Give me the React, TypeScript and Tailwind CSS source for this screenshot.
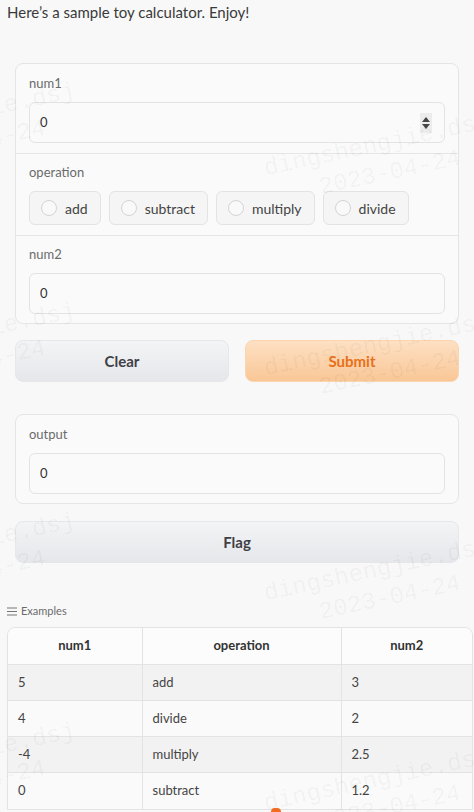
import React from "react";

const FONT = { fontFamily: "Lato, 'Noto Sans', sans-serif" };

const OPERATIONS = ["add", "subtract", "multiply", "divide"];

const EXAMPLES = [
  ["5", "add", "3"],
  ["4", "divide", "2"],
  ["-4", "multiply", "2.5"],
  ["0", "subtract", "1.2"],
];

function FieldLabel({ children }: { children: React.ReactNode }) {
  return <div className="text-[13px] leading-4 text-[#6b6b6b]">{children}</div>;
}

function NumberBox({ value, spinner }: { value: string; spinner?: boolean }) {
  return (
    <div className="mt-[11px] flex h-[41px] items-center justify-between rounded-md border border-[#e3e3e3] bg-[#fafafa] pl-[10px] pr-[12px] text-[13px] text-[#333]">
      <span>{value}</span>
      {spinner && (
        <span className="flex h-[20px] w-[12px] flex-col items-center justify-center gap-[2px] bg-[#ececec]">
          <svg width="8" height="5" viewBox="0 0 8 5">
            <path d="M4 0L8 5H0z" fill="#444" />
          </svg>
          <svg width="8" height="5" viewBox="0 0 8 5">
            <path d="M0 0h8L4 5z" fill="#444" />
          </svg>
        </span>
      )}
    </div>
  );
}

// faint diagonal watermark stamped over the page
function Watermark({ className }: { className: string }) {
  return (
    <div
      className={`pointer-events-none absolute -rotate-[12deg] text-[24px] leading-[30px] text-black/[0.045] ${className}`}
      style={{ fontFamily: "'Liberation Mono', monospace" }}
    >
      <div>dingshengjie.dsj</div>
      <div className="pl-[50px]">2023-04-24</div>
    </div>
  );
}

export default function App() {
  return (
    <div className="relative min-h-[812px] overflow-hidden bg-[#f8f8f8]" style={FONT}>
      <p className="px-[7px] pt-[2px] text-[15px] leading-5 text-[#3a3a3a]">
        Here’s a sample toy calculator. Enjoy!
      </p>

      <div className="px-[15px] pt-[41px]">
        <div className="rounded-lg border border-[#e5e5e5] bg-[#fafafa]">
          <div className="px-[13px] pb-[10px] pt-[11px]">
            <FieldLabel>num1</FieldLabel>
            <NumberBox value="0" spinner />
          </div>
          <div className="border-t border-[#e5e5e5] px-[13px] pb-[10px] pt-[10px]">
            <FieldLabel>operation</FieldLabel>
            <div className="mt-[11px] flex gap-[8px]">
              {OPERATIONS.map((op) => (
                <div
                  key={op}
                  className="flex h-[34px] items-center gap-[8px] rounded-md border border-[#e3e3e3] bg-[#f5f5f5] pl-[11px] pr-[12px] text-[14px] text-[#444]"
                >
                  <span className="h-[16px] w-[16px] rounded-full border border-[#d4d4d4] bg-[#f9f9f9]" />
                  {op}
                </div>
              ))}
            </div>
          </div>
          <div className="border-t border-[#e5e5e5] px-[13px] pb-[9px] pt-[10px]">
            <FieldLabel>num2</FieldLabel>
            <NumberBox value="0" />
          </div>
        </div>

        <div className="mt-[16px] flex gap-[16px]">
          <button className="h-[42px] flex-1 rounded-lg border border-[#e5e7eb] bg-gradient-to-b from-[#f3f4f6] to-[#e6e7ea] text-[15px] font-bold text-[#3f3f46]">
            Clear
          </button>
          <button className="h-[42px] flex-1 rounded-lg border border-[#fbd5ae] bg-gradient-to-b from-[#fde0c3] to-[#f9c796] text-[15px] font-bold text-[#e8701a]">
            Submit
          </button>
        </div>

        <div className="mt-[32px] rounded-lg border border-[#e5e5e5] bg-[#fafafa] px-[13px] pb-[9px] pt-[11px]">
          <FieldLabel>output</FieldLabel>
          <NumberBox value="0" />
        </div>

        <button className="mt-[17px] h-[42px] w-full rounded-lg border border-[#e5e7eb] bg-gradient-to-b from-[#f3f4f6] to-[#e6e7ea] text-[15px] font-bold text-[#3f3f46]">
          Flag
        </button>
      </div>

      <div className="mt-[40px] flex items-center gap-[4px] px-[7px] text-[11px] text-[#6b6b6b]">
        <svg width="10" height="9" viewBox="0 0 10 9">
          <path d="M0 1h10M0 4.5h10M0 8h10" stroke="#777" strokeWidth="1" />
        </svg>
        Examples
      </div>

      <div className="ml-[7px] mr-[1px] mt-[7px] overflow-hidden rounded-t-lg border border-[#e3e3e3]">
        <table className="w-full table-fixed border-collapse text-[13px] text-[#444]">
          <colgroup>
            <col className="w-[134px]" />
            <col className="w-[199px]" />
            <col />
          </colgroup>
          <thead>
            <tr className="h-[37px] bg-[#fcfcfc]">
              <th className="border-r border-[#e3e3e3] font-bold text-[#333]">num1</th>
              <th className="border-r border-[#e3e3e3] font-bold text-[#333]">operation</th>
              <th className="font-bold text-[#333]">num2</th>
            </tr>
          </thead>
          <tbody>
            {EXAMPLES.map((row, i) => (
              <tr
                key={i}
                className={`h-[36px] border-t border-[#e3e3e3] ${i % 2 === 0 ? "bg-[#f2f2f2]" : "bg-[#fafafa]"}`}
              >
                {row.map((cell, j) => (
                  <td
                    key={j}
                    className={`px-[10px] ${j < 2 ? "border-r border-[#e3e3e3]" : ""}`}
                  >
                    {cell}
                  </td>
                ))}
              </tr>
            ))}
          </tbody>
        </table>
      </div>

      <span className="absolute left-[271px] top-[808px] h-[8px] w-[10px] rounded-full bg-[#f26b21]" />

      <Watermark className="left-[-150px] top-[100px]" />
      <Watermark className="left-[265px] top-[130px]" />
      <Watermark className="left-[-150px] top-[320px]" />
      <Watermark className="left-[265px] top-[330px]" />
      <Watermark className="left-[-150px] top-[530px]" />
      <Watermark className="left-[265px] top-[555px]" />
      <Watermark className="left-[-150px] top-[740px]" />
      <Watermark className="left-[265px] top-[765px]" />
    </div>
  );
}
